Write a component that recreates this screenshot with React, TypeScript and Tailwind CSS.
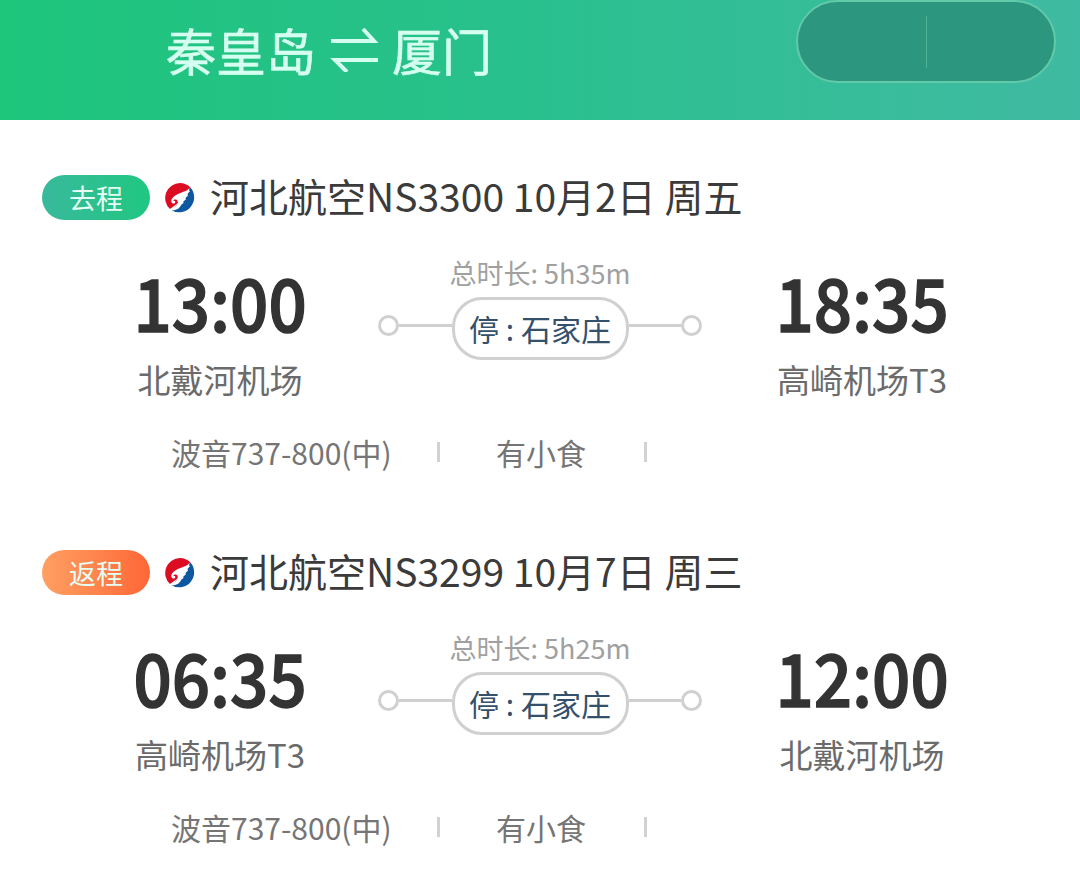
type Flight = {
  kind: "outbound" | "inbound";
  label: string;
  title: string;
  duration: string;
  stop: string;
  departTime: string;
  departAirport: string;
  arriveTime: string;
  arriveAirport: string;
  plane: string;
  meal: string;
};

const flights: Flight[] = [
  {
    kind: "outbound",
    label: "去程",
    title: "河北航空NS3300 10月2日 周五",
    duration: "总时长: 5h35m",
    stop: "停 : 石家庄",
    departTime: "13:00",
    departAirport: "北戴河机场",
    arriveTime: "18:35",
    arriveAirport: "高崎机场T3",
    plane: "波音737-800(中)",
    meal: "有小食",
  },
  {
    kind: "inbound",
    label: "返程",
    title: "河北航空NS3299 10月7日 周三",
    duration: "总时长: 5h25m",
    stop: "停 : 石家庄",
    departTime: "06:35",
    departAirport: "高崎机场T3",
    arriveTime: "12:00",
    arriveAirport: "北戴河机场",
    plane: "波音737-800(中)",
    meal: "有小食",
  },
];

const badgeColors = {
  outbound: "bg-linear-to-r from-[#37b99b] to-[#1fc781]",
  inbound: "bg-linear-to-r from-[#ff9f62] to-[#ff6636]",
};

function AirlineLogo() {
  return (
    <svg viewBox="0 0 30 30" className="ml-[15px] size-[30px] shrink-0">
      <path d="M5 26A15 15 0 0 1 15 0Q21 0 25.5 4.5L16 18Z" fill="#dc0c23" />
      <path d="M25.5 4.5A15 15 0 0 1 7 27.5L10 24L18 14Z" fill="#0c57a0" />
      {/* wing */}
      <path
        d="M24.5 5C21.5 8.5 17 9 13.5 10.8C9.5 12.5 6 15.5 6.3 18.5C6.8 21 9.8 21.2 10.3 19.2C10.4 18 9.2 17.6 8.4 18.4C8.4 16.3 11.5 15.8 12.6 18C13.6 21.5 10 25 5 26L8 27.5C12 27 15 25 16.5 21.5L18.5 20L18.3 18.5L20.8 16.5L20.5 15L23 12.5L22.5 11L25 8L24 7.5Z"
        fill="#fff"
      />
    </svg>
  );
}

function StopLine({ text }: { text: string }) {
  return (
    <div className="mt-[7px] flex h-[63px] items-center">
      <span className="-mt-1.5 size-[21px] shrink-0 rounded-full border-[3px] border-[#d0d0d0]" />
      <span className="-mt-1.5 h-[3px] grow bg-[#d0d0d0]" />
      <div className="flex h-[63px] w-[177px] items-center justify-center rounded-[30px] border-[3px] border-[#d0d0d0] pb-px text-[30px] leading-none whitespace-pre text-[#34506b]">
        {text}
      </div>
      <span className="-mt-1.5 h-[3px] grow bg-[#d0d0d0]" />
      <span className="-mt-1.5 size-[21px] shrink-0 rounded-full border-[3px] border-[#d0d0d0]" />
    </div>
  );
}

function Endpoint({ time, airport }: { time: string; airport: string }) {
  return (
    <div className="flex w-[200px] flex-col items-center whitespace-nowrap">
      <div className="mt-2 scale-x-[0.92] text-[73px] leading-[73px] font-medium text-[#333] [-webkit-text-stroke:1.5px_#333]">
        {time}
      </div>
      <div className="mt-[22px] text-[33px] leading-[40px] text-[#6b6b6b]">{airport}</div>
    </div>
  );
}

function FlightCard({ flight }: { flight: Flight }) {
  return (
    <section className="h-[375px] pt-[55px]">
      <div className="flex h-[45px] items-center pl-[42px]">
        <span
          className={`flex h-[45px] w-[108px] items-center justify-center rounded-full text-[27px] leading-none text-[#e5fff4] ${badgeColors[flight.kind]}`}
        >
          {flight.label}
        </span>
        <AirlineLogo />
        <h2 className="ml-[15px] pb-[5px] text-[39px] leading-[45px] whitespace-nowrap text-[#3b3b3b]">
          {flight.title}
        </h2>
      </div>

      <div className="mt-[36px] flex h-[150px] pl-[120px]">
        <Endpoint time={flight.departTime} airport={flight.departAirport} />
        <div className="mr-[60px] ml-[58px] w-[324px]">
          <div className="text-center text-[27px] leading-[34px] text-[#a0a0a0]">
            {flight.duration}
          </div>
          <StopLine text={flight.stop} />
        </div>
        <Endpoint time={flight.arriveTime} airport={flight.arriveAirport} />
      </div>

      <div className="mt-[26px] flex h-10 items-center pl-[171px] text-[30px] leading-none text-[#757575]">
        <span className="w-[266px] whitespace-nowrap">{flight.plane}</span>
        <span className="h-5 w-[3px] bg-[#d2d2d2]" />
        <span className="ml-[56px] w-[148px]">{flight.meal}</span>
        <span className="h-5 w-[3px] bg-[#d2d2d2]" />
      </div>
    </section>
  );
}

export default function App() {
  return (
    <div className="h-[888px] w-[1080px] overflow-hidden bg-white font-['Noto_Sans_CJK_SC',sans-serif]">
      <header className="flex h-[120px] items-start justify-between bg-linear-to-r from-[#1dc57b] via-[#29c08e] to-[#3fbaa2] pr-6 pl-[166px]">
        <h1 className="flex items-center pt-[19px] text-[50px] leading-[60px] text-[#d5fff0] [-webkit-text-stroke:0.6px_#d5fff0]">
          秦皇岛
          <svg
            viewBox="0 0 50 46"
            className="mx-[13px] h-[46px] w-[50px]"
            fill="none"
            stroke="currentColor"
            strokeWidth="4"
          >
            <path d="M2 15H45L34 3M49 34H6L18 46" />
          </svg>
          厦门
        </h1>
        <div className="flex h-[83px] w-[260px] items-center justify-center rounded-full border-2 border-[#62c9a9] bg-[#2d967e]">
          <span className="h-[52px] w-px bg-[#50b496]" />
        </div>
      </header>
      <main>
        {flights.map((flight) => (
          <FlightCard key={flight.kind} flight={flight} />
        ))}
      </main>
    </div>
  );
}
